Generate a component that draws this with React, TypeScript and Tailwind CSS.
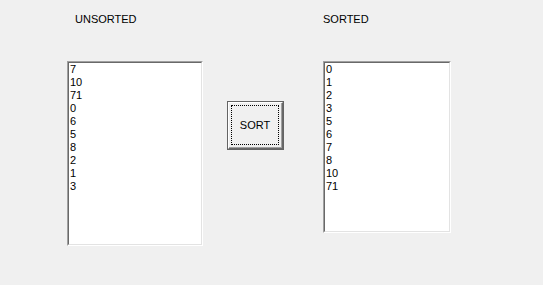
const unsorted = [7, 10, 71, 0, 6, 5, 8, 2, 1, 3];
const sorted = [...unsorted].sort((a, b) => a - b);

function ListBox({ items, className }: { items: number[]; className: string }) {
  return (
    <div
      className={
        "border-t-[#a0a0a0] border-l-[#a0a0a0] border-r-white border-b-white border bg-white " +
        className
      }
    >
      <div className="h-full border border-t-[#696969] border-l-[#696969] border-r-[#e3e3e3] border-b-[#e3e3e3] pl-[1px]">
        {items.map((n, i) => (
          <div key={i} className="h-[13px] leading-[13px]">
            {n}
          </div>
        ))}
      </div>
    </div>
  );
}

export default function App() {
  return (
    <div
      className="w-[543px] h-[285px] bg-[#f0f0f0] text-black text-[11px] flex items-start"
      style={{ fontFamily: '"Liberation Sans", Arial, sans-serif' }}
    >
      {/* unsorted */}
      <div className="ml-[67px] flex flex-col">
        <div className="pl-[8px] mt-[13px] h-[13px] leading-[13px]">UNSORTED</div>
        <ListBox items={unsorted} className="mt-[35px] w-[136px] h-[185px]" />
      </div>

      {/* button */}
      <button className="ml-[24px] mt-[101px] w-[57px] h-[49px] border border-[#646464] bg-[#f0f0f0] p-0">
        <div className="h-full border border-t-white border-l-white border-r-[#696969] border-b-[#696969] flex">
          <div className="flex-1 border-r border-b border-[#a0a0a0] p-[2px]">
            <div className="h-full border border-dotted border-black flex items-center justify-center">
              SORT
            </div>
          </div>
        </div>
      </button>

      {/* sorted */}
      <div className="ml-[39px] flex flex-col">
        <div className="mt-[13px] h-[13px] leading-[13px]">SORTED</div>
        <ListBox items={sorted} className="mt-[35px] w-[128px] h-[172px]" />
      </div>
    </div>
  );
}
